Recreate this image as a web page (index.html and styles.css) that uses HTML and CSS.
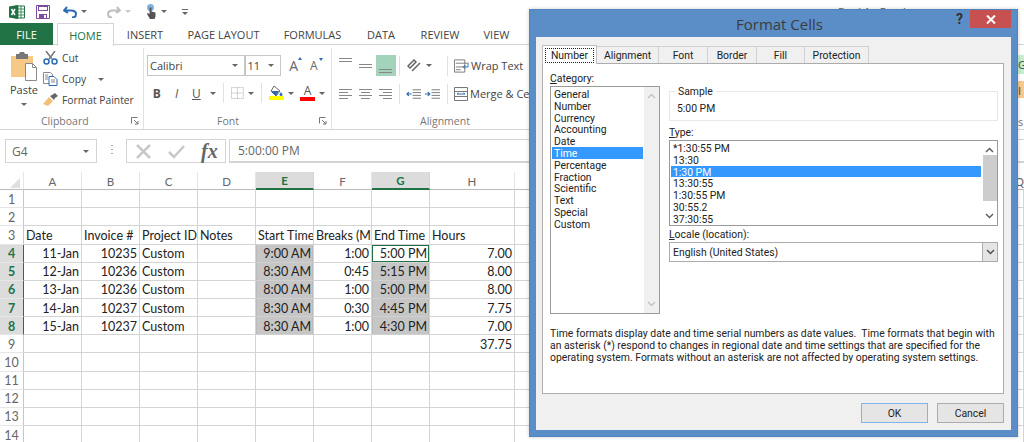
FILE: index.html
```html
<!DOCTYPE html>
<html lang="en">
<head>
  <meta charset="UTF-8">
  <title>Format Cells - Book1 - Excel</title>
  <link rel="stylesheet" href="styles.css">
</head>
<body>

<div class="titlebar">
  <svg class="qat-logo" width="16" height="14" viewBox="0 0 16 14"><path d="M6 1h9.500v12H6z" fill="#fff" stroke="#207245"/><path d="M9 1v12M12 1v12M6 4h9M6 7h9M6 10h9" stroke="#207245" stroke-width=".8"/><path d="M0 1.500 9 0v14L0 12.500z" fill="#207245"/><path d="M2.500 4 6 10M6 4l-3.500 6" stroke="#fff" stroke-width="1.500"/></svg>
  <svg class="qat-save" width="14" height="14" viewBox="0 0 14 14"><path d="M.5.500h13v13H.5z" fill="#fff" stroke="#7a4b9f"/><path d="M2 1h10v5H2zM3 9h8v4H3z" fill="#7a4b9f"/><path d="M3 2h8v3H3z" fill="#fff"/><path d="M8 10h2v3H8z" fill="#fff"/></svg>
  <svg class="qat-undo" width="14" height="12" viewBox="0 0 14 12"><path d="M4 1 1 4.500 5 7M1.500 4.500H8c3 0 5 1.500 5 3.500s-1.500 3.500-4 3.500" fill="none" stroke="#2c6bb0" stroke-width="2"/></svg>
  <span class="caret qat-caret"></span>
  <svg class="qat-redo" width="14" height="12" viewBox="0 0 14 12"><path d="M10 1l3 3.500L9 7M12.500 4.500H6c-3 0-5 1.500-5 3.500s1.500 3.500 4 3.500" fill="none" stroke="#bdbdbd" stroke-width="2"/></svg>
  <span class="caret caret-off qat-caret"></span>
  <svg class="qat-touch" width="11" height="15" viewBox="0 0 11 15"><circle cx="4.500" cy="3.500" r="3.500" fill="#7fb0de"/><path d="M3.500 3.500h2v4l4 1v4l-1 2.500H4L1 10l.5-1 2 1z" fill="#555"/></svg>
  <span class="caret qat-caret"></span>
  <span class="qat-more"><i></i><span class="caret"></span></span>
  <span class="window-title">Book1 - Excel</span>
</div>

<div class="tabs">
  <span class="tab tab-file">FILE</span>
  <span class="tab tab-home">HOME</span>
  <span class="tab tab-insert">INSERT</span>
  <span class="tab tab-layout">PAGE LAYOUT</span>
  <span class="tab tab-formulas">FORMULAS</span>
  <span class="tab tab-data">DATA</span>
  <span class="tab tab-review">REVIEW</span>
  <span class="tab tab-view">VIEW</span>
</div>

<div class="ribbon">
  <section class="group group-clipboard">
    <div class="group-body">
      <div class="paste">
        <svg width="28" height="29" viewBox="0 0 28 29"><path d="M1 4h22v21H1z" fill="#f6c987"/><path d="M6 2h3l1-2h4l1 2h3v5H6z" fill="#777"/><path d="M15.500 11.500h7l4 4v13h-11z" fill="#fff" stroke="#8a8a8a"/><path d="M22.500 11.500v4h4" fill="none" stroke="#8a8a8a"/></svg>
        <span class="paste-label">Paste</span>
        <span class="caret"></span>
      </div>
      <div class="clip-actions">
        <div class="clip-row">
          <svg width="15" height="14" viewBox="0 0 15 14"><path d="M3 0l6 8M12 0 6 8" stroke="#777" stroke-width="1.500"/><circle cx="3.500" cy="10.500" r="2.500" fill="none" stroke="#2c6bb0" stroke-width="1.500"/><circle cx="11.500" cy="10.500" r="2.500" fill="none" stroke="#2c6bb0" stroke-width="1.500"/></svg>
          <span>Cut</span>
        </div>
        <div class="clip-row">
          <svg width="15" height="14" viewBox="0 0 15 14"><path d="M.5.500h7l2 2v9h-9z" fill="#fff" stroke="#888"/><path d="M6 4.500h5l3 3v6H6z" fill="#fff" stroke="#2c6bb0"/><path d="M2 3h3M2 5h3M2 7h3M8 8h4M8 10h4" stroke="#888"/></svg>
          <span>Copy</span>
          <span class="caret copy-caret"></span>
        </div>
        <div class="clip-row">
          <svg width="15" height="14" viewBox="0 0 15 14"><path d="M0 11 6 4l4 4-5 5z" fill="#f0c078"/><path d="M7 3l2-1 3-2 3 3-3 2-1 2z" fill="#666"/></svg>
          <span>Format Painter</span>
        </div>
      </div>
    </div>
    <div class="group-label"><span>Clipboard</span><svg class="launcher" width="8" height="8" viewBox="0 0 8 8"><path d="M.5.500h6M.5.500v6M3 3l4 4M7 4v3H4" fill="none" stroke="#777"/></svg></div>
  </section>

  <section class="group group-font">
    <div class="group-body font-body">
      <div class="font-row">
        <div class="combo combo-font"><span>Calibri</span><span class="caret"></span></div>
        <div class="combo combo-size"><span>11</span><span class="caret"></span></div>
        <span class="grow-a">A<i class="up"></i></span>
        <span class="grow-a small-a">A<i class="down"></i></span>
      </div>
      <div class="font-row font-row-2">
        <b class="fmt fmt-b">B</b>
        <i class="fmt fmt-i">I</i>
        <u class="fmt fmt-u">U</u>
        <span class="caret"></span>
        <span class="sep"></span>
        <svg width="13" height="12" viewBox="0 0 13 12"><path d="M.5.500h12v11H.5zM6.500.500v11M.5 6h12" fill="none" stroke="#aaa" stroke-dasharray="1 1"/></svg>
        <span class="caret"></span>
        <span class="sep"></span>
        <span class="fill-icon"><svg width="15" height="10" viewBox="0 0 15 10"><path d="M5 0l6 5-4 5-5-5z" fill="#fff" stroke="#666"/><path d="M2 5h8l-3 5z" fill="#2c6bb0"/><path d="M12 6l1.500 2.500a1.500 1.500 0 1 1-3 0z" fill="#2c6bb0"/></svg><i class="swatch-yellow"></i></span>
        <span class="caret"></span>
        <span class="font-color"><span>A</span><i class="swatch-red"></i></span>
        <span class="caret"></span>
      </div>
    </div>
    <div class="group-label"><span>Font</span><svg class="launcher" width="8" height="8" viewBox="0 0 8 8"><path d="M.5.500h6M.5.500v6M3 3l4 4M7 4v3H4" fill="none" stroke="#777"/></svg></div>
  </section>

  <section class="group group-align">
    <div class="group-body align-body">
      <div class="align-row">
        <span class="lines v-top"><i></i><i></i></span>
        <span class="lines v-mid"><i></i><i></i></span>
        <span class="lines v-bottom"><i></i><i></i></span>
        <span class="sep"></span>
        <svg class="orient" width="14" height="14" viewBox="0 0 14 14"><path d="M1 7l6-6 2 2-6 6zM5 12l8-8" fill="none" stroke="#666" stroke-width="1.500"/></svg>
        <span class="caret"></span>
        <span class="sep sep-wide"></span>
        <svg width="15" height="14" viewBox="0 0 16 14"><path d="M.5.500h11v13H.5z" fill="#fff" stroke="#777"/><path d="M2 4h14M2 8h9M2 11h5" stroke="#777"/><path d="M15 5v3h-5l2-2m-2 2 2 2" fill="none" stroke="#2c6bb0"/></svg>
        <span class="align-text">Wrap Text</span>
      </div>
      <div class="align-row align-row-2">
        <span class="lines lines-4 h-left"><i></i><i></i><i></i><i></i></span>
        <span class="lines lines-4 h-center"><i></i><i></i><i></i><i></i></span>
        <span class="lines lines-4 h-right"><i></i><i></i><i></i><i></i></span>
        <span class="sep"></span>
        <svg class="indent" width="15" height="10" viewBox="0 0 16 10"><path d="M7 .500h9M7 3.500h9M7 6.500h9M7 9.500h9" stroke="#777"/><path d="M6 5H1m2-2L1 5l2 2" fill="none" stroke="#2c6bb0" stroke-width="1.300"/></svg>
        <svg class="indent" width="15" height="10" viewBox="0 0 16 10"><path d="M7 .500h9M7 3.500h9M7 6.500h9M7 9.500h9" stroke="#777"/><path d="M0 5h5M3 3l2 2-2 2" fill="none" stroke="#2c6bb0" stroke-width="1.300"/></svg>
        <span class="sep"></span>
        <svg width="14" height="14" viewBox="0 0 14 14"><path d="M.5.500h13v13H.5zM.5 4.500h13M.5 9.500h13" fill="#fff" stroke="#777"/><path d="M3 7h8M3 7l1.500-1M11 7 9.500 6" stroke="#2c6bb0"/></svg>
        <span class="align-text">Merge &amp; Center</span>
      </div>
    </div>
    <div class="group-label"><span>Alignment</span></div>
  </section>

  <div class="style-strip">
    <span class="style-cell style-good">G</span>
    <span class="style-cell style-input">I</span>
    <span class="style-name">s</span>
  </div>
</div>

<div class="formula-bar">
  <div class="name-box"><span>G4</span><span class="caret"></span></div>
  <span class="grip"></span>
  <div class="formula-btns">
    <svg width="17" height="15" viewBox="0 0 17 15"><path d="M2 1l13 13M15 1 2 14" stroke="#c8c8c8" stroke-width="2.500"/></svg>
    <svg width="17" height="15" viewBox="0 0 17 15"><path d="M1 8l5 5L16 2" fill="none" stroke="#c8c8c8" stroke-width="2.500"/></svg>
    <span class="fx">fx</span>
  </div>
  <div class="formula-input">5:00:00 PM</div>
</div>

<table class="sheet">
  <colgroup>
    <col class="col-head">
    <col class="col-std"><col class="col-std"><col class="col-std"><col class="col-std">
    <col class="col-std"><col class="col-std"><col class="col-std">
    <col class="col-h">
    <col>
  </colgroup>
  <tr class="col-heads">
    <th class="corner"><span></span></th>
    <th>A</th><th>B</th><th>C</th><th>D</th><th class="on">E</th><th>F</th><th class="on">G</th><th>H</th><th class="far">Q</th>
  </tr>
  <tr><th>1</th><td></td><td></td><td></td><td></td><td></td><td></td><td></td><td></td><td></td></tr>
  <tr><th>2</th><td></td><td></td><td></td><td></td><td></td><td></td><td></td><td></td><td></td></tr>
  <tr><th>3</th><td>Date</td><td>Invoice #</td><td>Project ID</td><td>Notes</td><td>Start Time</td><td>Breaks (M</td><td>End Time</td><td>Hours</td><td></td></tr>
  <tr><th class="on">4</th><td class="num">11-Jan</td><td class="num">10235</td><td>Custom</td><td></td><td class="num sel">9:00 AM</td><td class="num">1:00</td><td class="num active">5:00 PM</td><td class="num">7.00</td><td></td></tr>
  <tr><th class="on">5</th><td class="num">12-Jan</td><td class="num">10236</td><td>Custom</td><td></td><td class="num sel">8:30 AM</td><td class="num">0:45</td><td class="num sel">5:15 PM</td><td class="num">8.00</td><td></td></tr>
  <tr><th class="on">6</th><td class="num">13-Jan</td><td class="num">10236</td><td>Custom</td><td></td><td class="num sel">8:00 AM</td><td class="num">1:00</td><td class="num sel">5:00 PM</td><td class="num">8.00</td><td></td></tr>
  <tr><th class="on">7</th><td class="num">14-Jan</td><td class="num">10237</td><td>Custom</td><td></td><td class="num sel">8:30 AM</td><td class="num">0:30</td><td class="num sel">4:45 PM</td><td class="num">7.75</td><td></td></tr>
  <tr><th class="on">8</th><td class="num">15-Jan</td><td class="num">10237</td><td>Custom</td><td></td><td class="num sel">8:30 AM</td><td class="num">1:00</td><td class="num sel">4:30 PM</td><td class="num">7.00</td><td></td></tr>
  <tr><th>9</th><td></td><td></td><td></td><td></td><td></td><td></td><td></td><td class="num">37.75</td><td></td></tr>
  <tr><th>10</th><td></td><td></td><td></td><td></td><td></td><td></td><td></td><td></td><td></td></tr>
  <tr><th>11</th><td></td><td></td><td></td><td></td><td></td><td></td><td></td><td></td><td></td></tr>
  <tr><th>12</th><td></td><td></td><td></td><td></td><td></td><td></td><td></td><td></td><td></td></tr>
  <tr><th>13</th><td></td><td></td><td></td><td></td><td></td><td></td><td></td><td></td><td></td></tr>
  <tr><th>14</th><td></td><td></td><td></td><td></td><td></td><td></td><td></td><td></td><td></td></tr>
</table>

<div class="dialog">
  <div class="dialog-title">
    <span class="dialog-name">Format Cells</span>
    <span class="dialog-help">?</span>
    <span class="dialog-close">
      <svg width="10" height="9" viewBox="0 0 10 9"><path d="M1 .500l8 8M9 .500l-8 8" stroke="#fff" stroke-width="2"/></svg>
    </span>
  </div>
  <div class="dialog-body">
    <div class="dlg-tabs">
      <span class="dlg-tab dlg-tab-on"><span class="focus">Number</span></span>
      <span class="dlg-tab tab-w-align">Alignment</span>
      <span class="dlg-tab tab-w-font">Font</span>
      <span class="dlg-tab tab-w-border">Border</span>
      <span class="dlg-tab tab-w-fill">Fill</span>
      <span class="dlg-tab tab-w-prot">Protection</span>
    </div>
    <div class="panel">
      <div class="panel-cols">
        <div class="cat-col">
          <div class="field-label"><u>C</u>ategory:</div>
          <div class="listbox cat-list">
            <ul class="items">
              <li>General</li>
              <li>Number</li>
              <li>Currency</li>
              <li>Accounting</li>
              <li>Date</li>
              <li class="picked">Time</li>
              <li>Percentage</li>
              <li>Fraction</li>
              <li>Scientific</li>
              <li>Text</li>
              <li>Special</li>
              <li>Custom</li>
            </ul>
            <div class="scroll scroll-off">
              <svg width="9" height="6" viewBox="0 0 9 6"><path d="M1 5l3.500-3.500L8 5" fill="none" stroke="#c4c4c4" stroke-width="1.500"/></svg>
              <svg width="9" height="6" viewBox="0 0 9 6"><path d="M1 1l3.500 3.500L8 1" fill="none" stroke="#c4c4c4" stroke-width="1.500"/></svg>
            </div>
          </div>
        </div>
        <div class="opt-col">
          <fieldset class="sample">
            <legend>Sample</legend>
            <div class="sample-value">5:00 PM</div>
          </fieldset>
          <div class="field-label type-label"><u>T</u>ype:</div>
          <div class="listbox type-list">
            <ul class="items">
              <li>*1:30:55 PM</li>
              <li>13:30</li>
              <li class="picked">1:30 PM</li>
              <li>13:30:55</li>
              <li>1:30:55 PM</li>
              <li>30:55.2</li>
              <li>37:30:55</li>
            </ul>
            <div class="scroll">
              <svg width="9" height="6" viewBox="0 0 9 6"><path d="M1 5l3.500-3.500L8 5" fill="none" stroke="#606060" stroke-width="1.500"/></svg>
              <span class="thumb"></span>
              <svg width="9" height="6" viewBox="0 0 9 6"><path d="M1 1l3.500 3.500L8 1" fill="none" stroke="#606060" stroke-width="1.500"/></svg>
            </div>
          </div>
          <div class="field-label locale-label"><u>L</u>ocale (location):</div>
          <div class="locale">
            <span>English (United States)</span>
            <span class="locale-btn"><svg width="9" height="6" viewBox="0 0 9 6"><path d="M1 1l3.500 3.500L8 1" fill="none" stroke="#505050" stroke-width="1.500"/></svg></span>
          </div>
        </div>
      </div>
      <p class="format-note">Time formats display date and time serial numbers as date values.&nbsp; Time formats that begin with<br>an asterisk (*) respond to changes in regional date and time settings that are specified for the<br>operating system. Formats without an asterisk are not affected by operating system settings.</p>
    </div>
    <div class="dlg-buttons">
      <span class="btn btn-default">OK</span>
      <span class="btn">Cancel</span>
    </div>
  </div>
</div>

</body>
</html>
```

FILE: styles.css
```css
* {
  box-sizing: border-box;
}

html, body {
  margin: 0;
  height: 442px;
  overflow: hidden;
}

body {
  position: relative;
  background: #fff;
  color: #444;
  font-family: 'Open Sans', 'Noto Sans', sans-serif;
  font-size: 10.3px;
}

.caret {
  display: inline-block;
  width: 0;
  height: 0;
  border-left: 3px solid transparent;
  border-right: 3px solid transparent;
  border-top: 3px solid #666;
}

.caret-off {
  border-top-color: #c8c8c8;
}

.sep {
  display: inline-block;
  width: 1px;
  height: 20px;
  background: #e1e1e1;
}

/* title bar */
.titlebar {
  display: flex;
  align-items: center;
  height: 23px;
  padding-left: 9px;
}

.qat-save { margin-left: 11px; }
.qat-undo { margin-left: 13px; }
.qat-redo { margin-left: 20px; }
.qat-touch { margin-left: 15px; }
.qat-caret { margin-left: 4px; }

.qat-more {
  display: inline-flex;
  flex-direction: column;
  gap: 2px;
  margin-left: 15px;
}

.qat-more i {
  display: block;
  width: 6px;
  height: 1px;
  background: #666;
}

.window-title {
  margin-left: 650px;
  font-size: 11px;
  color: #666;
}

/* ribbon tabs */
.tabs {
  display: flex;
  height: 22px;
  border-bottom: 1px solid #d4d4d4;
  font-size: 11px;
  color: #444;
  white-space: nowrap;
}

.tab {
  display: flex;
  align-items: center;
  justify-content: center;
  height: 22px;
}

.tab-file {
  width: 53px;
  background: #217346;
  color: #fff;
}

.tab-home {
  width: 57px;
  margin-left: 4px;
  height: 23px;
  background: #fff;
  border: 1px solid #d4d4d4;
  border-bottom: 0;
  color: #217346;
}

.tab-insert { margin-left: 14px; width: 34px; }
.tab-layout { margin-left: 27px; width: 69px; }
.tab-formulas { margin-left: 27px; width: 55px; }
.tab-data { margin-left: 27px; width: 28px; }
.tab-review { margin-left: 27px; width: 36px; }
.tab-view { margin-left: 26px; width: 25px; }

.ribbon {
  display: flex;
  height: 85px;
  border-bottom: 1px solid #d4d4d4;
}

.group {
  display: flex;
  flex-direction: column;
  height: 81px;
  margin-top: 3px;
}

.group-clipboard {
  width: 144px;
  border-right: 1px solid #e1e1e1;
}

.group-font {
  width: 188px;
  border-right: 1px solid #e1e1e1;
}

.group-align {
  width: 240px;
}

.group-body {
  flex: 1;
  display: flex;
}

.group-label {
  display: flex;
  align-items: center;
  justify-content: space-between;
  height: 17px;
  color: #777;
  font-size: 10.500px;
}

.group-clipboard .group-label { padding: 0 4px 0 41px; }
.group-font .group-label { padding: 0 4px 0 73px; }
.group-align .group-label { padding: 0 0 0 88px; }

/* clipboard */
.paste {
  display: flex;
  flex-direction: column;
  align-items: center;
  width: 43px;
  padding: 4px 0 0 5px;
}

.paste-label {
  margin-top: 1px;
  font-size: 11px;
}

.paste .caret {
  margin-top: 6px;
}

.clip-actions {
  display: flex;
  flex-direction: column;
  gap: 7px;
  padding-top: 3px;
}

.clip-row {
  display: flex;
  align-items: center;
  gap: 4px;
  height: 14px;
}

.copy-caret {
  margin-left: 8px;
}

/* font */
.font-body {
  flex-direction: column;
  padding: 7px 0 0 3px;
}

.font-row {
  display: flex;
  align-items: center;
}

.font-row-2 {
  margin-top: 7px;
  height: 20px;
}

.combo {
  display: flex;
  align-items: center;
  justify-content: space-between;
  height: 21px;
  padding: 0 6px 0 2px;
  border: 1px solid #c6c6c6;
}

.combo-font { width: 102px; font-size: 11px; }
.combo-size { width: 38px; margin-right: 8px; font-size: 11px; }

.grow-a {
  position: relative;
  width: 22px;
  font-size: 14px;
  color: #666;
}

.small-a {
  font-size: 12px;
}

.grow-a i {
  position: absolute;
  left: 9px;
  top: 1px;
  border-left: 2px solid transparent;
  border-right: 2px solid transparent;
}

.grow-a .up { border-bottom: 3px solid #2c6bb0; }
.grow-a .down { border-top: 3px solid #2c6bb0; }

.fmt {
  width: 20px;
  text-align: center;
  font-size: 12px;
  color: #555;
}

.font-row-2 > .caret { margin: 0 6px 0 4px; }
.font-row-2 > .sep { margin: 0 7px 0 1px; }

.fill-icon,
.font-color {
  display: inline-flex;
  flex-direction: column;
  align-items: center;
  width: 15px;
}

.font-color span {
  font-size: 12px;
  line-height: 12px;
  color: #555;
}

.swatch-yellow,
.swatch-red {
  display: block;
  width: 15px;
  height: 4px;
  background: #ffff00;
}

.swatch-red { background: #ff0000; }

/* alignment */
.align-body {
  flex-direction: column;
  padding: 7px 0 0 4px;
}

.align-row {
  display: flex;
  align-items: center;
  height: 21px;
}

.align-row-2 {
  margin-top: 7px;
}

.lines {
  display: flex;
  flex-direction: column;
  gap: 2px;
  width: 20px;
  height: 21px;
  padding: 3px 3px;
}

.lines i {
  display: block;
  height: 1px;
  width: 13px;
  background: #888;
}

.v-mid { justify-content: center; }
.v-bottom { justify-content: flex-end; background: #a3d3bb; }
.lines-4 { justify-content: center; padding: 0 3px; }
.h-left i:nth-child(even) { width: 9px; }
.h-center i:nth-child(even) { width: 9px; margin-left: 2px; }
.h-right i:nth-child(even) { width: 9px; margin-left: 4px; }

.align-row > .sep { margin: 0 6px 0 3px; }
.align-row > .caret { margin-left: 5px; }
.orient { margin-left: 1px; }
.align-row > .sep-wide { margin-left: 15px; }
.indent { margin-right: 4px; }
.align-text { margin-left: 2px; font-size: 11px; white-space: nowrap; }

.style-strip {
  display: flex;
  flex-direction: column;
  width: 6px;
  margin-left: auto;
  padding-top: 10px;
  font-size: 11px;
}

.style-cell {
  overflow: hidden;
  height: 20px;
  line-height: 20px;
}

.style-good { background: #c6efce; }
.style-input { background: #f8c98c; margin-top: 7px; height: 18px; }
.style-name { margin-top: 16px; color: #777; }

/* formula bar */
.formula-bar {
  display: flex;
  align-items: stretch;
  height: 24px;
  margin-top: 9px;
  padding-left: 5px;
  font-size: 12px;
}

.name-box {
  display: flex;
  align-items: center;
  justify-content: space-between;
  width: 92px;
  padding: 0 7px 0 6px;
  border: 1px solid #d4d4d4;
  color: #666;
}

.grip {
  width: 2px;
  margin: 6px 13px 6px 14px;
  background: repeating-linear-gradient(#aaa 0 1px, transparent 1px 4px);
}

.formula-btns {
  display: flex;
  align-items: center;
  gap: 16px;
  width: 100px;
  padding-left: 8px;
  border: 1px solid #d4d4d4;
}

.fx {
  font-family: 'Liberation Serif', serif;
  font-style: italic;
  font-weight: bold;
  font-size: 20px;
  color: #666;
}

.formula-input {
  flex: 1;
  display: flex;
  align-items: center;
  margin-left: 3px;
  padding-left: 8px;
  border-top: 1px solid #d4d4d4;
  border-bottom: 2px solid #d4d4d4;
  border-left: 1px solid #d4d4d4;
  color: #666;
}

/* worksheet */
.sheet {
  width: 1024px;
  margin-top: 9px;
  table-layout: fixed;
  border-collapse: separate;
  border-spacing: 0;
  font-family: Lato, 'Open Sans', sans-serif;
  font-size: 12.500px;
  color: #222;
}

.col-head { width: 24px; }
.col-std { width: 58px; }
.col-h { width: 85px; }

.sheet tr {
  height: 18.150px;
}

.sheet th,
.sheet td {
  padding: 1px 2px 0;
  overflow: hidden;
  white-space: nowrap;
  border-right: 1px solid #d4d4d4;
  border-bottom: 1px solid #d4d4d4;
}

.sheet th {
  padding: 1px 0 0;
  font-weight: normal;
  text-align: center;
  color: #666;
  border-bottom-color: #e6e6e6;
  border-right-color: #c6c6c6;
}

.col-heads th {
  height: 18px;
  font-size: 11.500px;
  border-right-color: #e6e6e6;
  border-bottom: 1px solid #bbb;
}

.sheet th.far {
  text-align: right;
  padding-right: 0;
  border-right: 0;
}

.corner span {
  display: block;
  width: 0;
  height: 0;
  margin: 3px 3px 0 auto;
  border-left: 10px solid transparent;
  border-bottom: 10px solid #dfdfdf;
}

.sheet th.on {
  background: #dcdcdc;
  color: #217346;
  font-weight: bold;
  border-right: 1px solid #217346;
}

.col-heads th.on {
  border-right: 1px solid #d4d4d4;
  border-bottom: 2px solid #217346;
}

.num {
  text-align: right;
}

.sheet td.sel {
  background: #c6c6c6;
  border-bottom-color: #d0d0d0;
  box-shadow: inset 1px 0 #bbb, inset -1px 0 #bbb;
}

.sheet td.active {
  box-shadow: inset 0 0 0 1px #217346;
}

/* format cells dialog */
.dialog {
  position: absolute;
  left: 529px;
  top: 9px;
  width: 489px;
  height: 428px;
  background: #5b8ec7;
  border: 1px solid #4f84c0;
  box-shadow: 0 0 4px rgba(0, 0, 0, 0.2);
  padding: 0 6px 6px;
  display: flex;
  flex-direction: column;
  font-family: Roboto, 'Open Sans', sans-serif;
  font-size: 10.400px;
  color: #222;
}

.dialog-title {
  display: flex;
  align-items: flex-start;
  height: 27px;
  white-space: nowrap;
}

.dialog-name {
  margin-left: 200px;
  margin-top: 4px;
  font-family: 'Open Sans', sans-serif;
  font-size: 15px;
  color: #3c3c3c;
}

.dialog-help {
  margin-left: 133px;
  margin-top: 1px;
  font-size: 14px;
  font-weight: bold;
  color: #333;
}

.dialog-close {
  display: flex;
  align-items: center;
  justify-content: center;
  width: 41px;
  height: 18px;
  margin-left: auto;
  background: #c75050;
}

.dialog-body {
  flex: 1;
  display: flex;
  flex-direction: column;
  padding: 7px 7px 0 6px;
  background: #f0f0f0;
}

.dlg-tabs {
  display: flex;
  align-items: flex-end;
  height: 19px;
}

.dlg-tab {
  display: flex;
  align-items: center;
  justify-content: center;
  height: 17px;
  background: #f0f0f0;
  border: 1px solid #d0d0d0;
  border-bottom: 0;
  border-left: 0;
}

.dlg-tab-on {
  width: 55px;
  height: 19px;
  background: #fff;
  border: 1px solid #c0c0c0;
  border-bottom: 0;
  position: relative;
  top: 1px;
}

.focus {
  padding: 0 5px;
  border: 1px dotted #222;
}

.tab-w-align { width: 62px; }
.tab-w-font { width: 49px; }
.tab-w-border { width: 49px; }
.tab-w-fill { width: 48px; }
.tab-w-prot { width: 64px; }

.panel {
  height: 331px;
  padding: 8px 7px 0;
  background: #fff;
  border: 1px solid #acacac;
}

.panel-cols {
  display: grid;
  grid-template-columns: 110px 329px;
  gap: 9px;
}

.field-label {
  height: 14px;
  line-height: 14px;
}

.listbox {
  display: flex;
  background: #fff;
  border: 1px solid #9a9a9a;
}

.items {
  flex: 1;
  margin: 0;
  padding: 1px;
  list-style: none;
}

.items li {
  height: 11.800px;
  line-height: 13.500px;
  padding-left: 2px;
}

.items .picked {
  background: #3399ff;
  color: #fff;
}

.cat-list {
  height: 228px;
}

.scroll {
  display: flex;
  flex-direction: column;
  align-items: center;
  justify-content: space-between;
  width: 15px;
  padding: 6px 0;
  background: #f0f0f0;
}

.scroll .thumb {
  flex: 1;
  width: 14px;
  margin: 2px 0 12px;
  background: #cdcdcd;
}

.type-list .scroll {
  background: #fff;
}

.sample {
  height: 36px;
  margin: 13px 0 0;
  padding: 0 7px;
  border: 1px solid #e8e8e8;
  min-width: 0;
}

.sample legend {
  margin-left: -2px;
  padding: 0 3px;
}

.sample-value {
  margin-top: 4px;
}

.type-label {
  margin-top: 5px;
}

.type-list {
  height: 86px;
}

.locale-label {
  margin-top: 2px;
}

.locale {
  display: flex;
  align-items: center;
  justify-content: space-between;
  height: 20px;
  padding-left: 3px;
  border: 1px solid #acacac;
}

.locale-btn {
  display: flex;
  align-items: center;
  justify-content: center;
  width: 15px;
  height: 18px;
  background: #e5e5e5;
  border-left: 1px solid #acacac;
}

.format-note {
  margin: 14px 0 0;
  line-height: 12px;
  white-space: nowrap;
}

.dlg-buttons {
  display: flex;
  justify-content: flex-end;
  gap: 9px;
  margin-top: 9px;
}

.btn {
  display: flex;
  align-items: center;
  justify-content: center;
  width: 67px;
  height: 20px;
  background: #e5e5e5;
  border: 1px solid #acacac;
}

.btn-default {
  border-color: #7eb4ea;
}
```
